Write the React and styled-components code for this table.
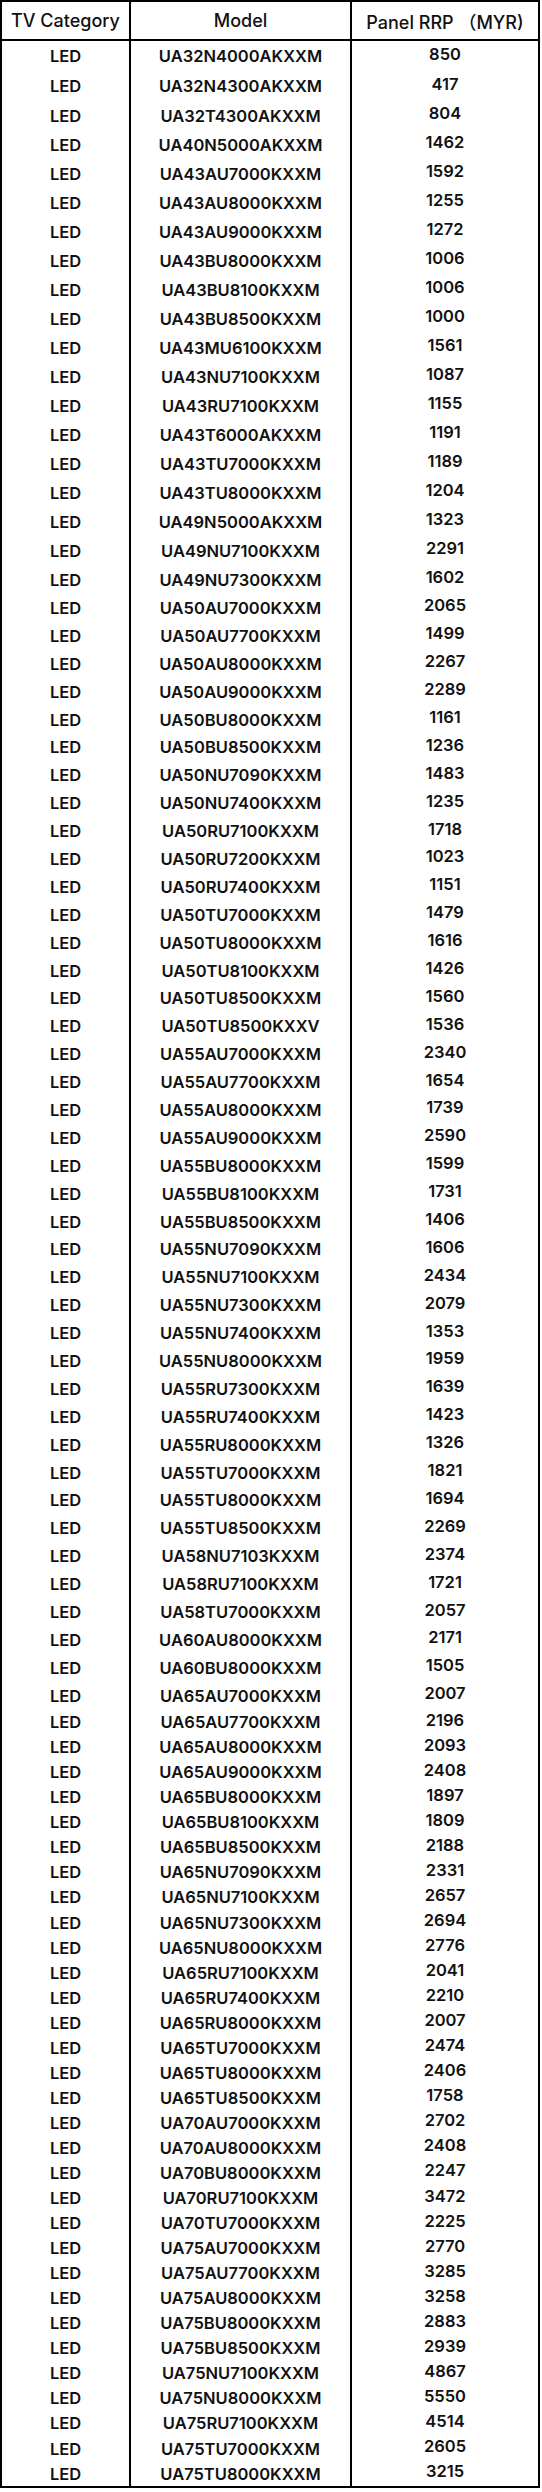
import styled, { createGlobalStyle } from "styled-components";

const GlobalStyle = createGlobalStyle`
  html, body {
    margin: 0;
    padding: 0;
    background: #ffffff;
  }
  body {
    font-family: Inter, "Noto Sans", "Noto Sans CJK SC", sans-serif;
    color: #111111;
  }
`;

const rows = [
    ["UA32N4000AKXXM", "850"],
    ["UA32N4300AKXXM", "417"],
    ["UA32T4300AKXXM", "804"],
    ["UA40N5000AKXXM", "1462"],
    ["UA43AU7000KXXM", "1592"],
    ["UA43AU8000KXXM", "1255"],
    ["UA43AU9000KXXM", "1272"],
    ["UA43BU8000KXXM", "1006"],
    ["UA43BU8100KXXM", "1006"],
    ["UA43BU8500KXXM", "1000"],
    ["UA43MU6100KXXM", "1561"],
    ["UA43NU7100KXXM", "1087"],
    ["UA43RU7100KXXM", "1155"],
    ["UA43T6000AKXXM", "1191"],
    ["UA43TU7000KXXM", "1189"],
    ["UA43TU8000KXXM", "1204"],
    ["UA49N5000AKXXM", "1323"],
    ["UA49NU7100KXXM", "2291"],
    ["UA49NU7300KXXM", "1602"],
    ["UA50AU7000KXXM", "2065"],
    ["UA50AU7700KXXM", "1499"],
    ["UA50AU8000KXXM", "2267"],
    ["UA50AU9000KXXM", "2289"],
    ["UA50BU8000KXXM", "1161"],
    ["UA50BU8500KXXM", "1236"],
    ["UA50NU7090KXXM", "1483"],
    ["UA50NU7400KXXM", "1235"],
    ["UA50RU7100KXXM", "1718"],
    ["UA50RU7200KXXM", "1023"],
    ["UA50RU7400KXXM", "1151"],
    ["UA50TU7000KXXM", "1479"],
    ["UA50TU8000KXXM", "1616"],
    ["UA50TU8100KXXM", "1426"],
    ["UA50TU8500KXXM", "1560"],
    ["UA50TU8500KXXV", "1536"],
    ["UA55AU7000KXXM", "2340"],
    ["UA55AU7700KXXM", "1654"],
    ["UA55AU8000KXXM", "1739"],
    ["UA55AU9000KXXM", "2590"],
    ["UA55BU8000KXXM", "1599"],
    ["UA55BU8100KXXM", "1731"],
    ["UA55BU8500KXXM", "1406"],
    ["UA55NU7090KXXM", "1606"],
    ["UA55NU7100KXXM", "2434"],
    ["UA55NU7300KXXM", "2079"],
    ["UA55NU7400KXXM", "1353"],
    ["UA55NU8000KXXM", "1959"],
    ["UA55RU7300KXXM", "1639"],
    ["UA55RU7400KXXM", "1423"],
    ["UA55RU8000KXXM", "1326"],
    ["UA55TU7000KXXM", "1821"],
    ["UA55TU8000KXXM", "1694"],
    ["UA55TU8500KXXM", "2269"],
    ["UA58NU7103KXXM", "2374"],
    ["UA58RU7100KXXM", "1721"],
    ["UA58TU7000KXXM", "2057"],
    ["UA60AU8000KXXM", "2171"],
    ["UA60BU8000KXXM", "1505"],
    ["UA65AU7000KXXM", "2007"],
    ["UA65AU7700KXXM", "2196"],
    ["UA65AU8000KXXM", "2093"],
    ["UA65AU9000KXXM", "2408"],
    ["UA65BU8000KXXM", "1897"],
    ["UA65BU8100KXXM", "1809"],
    ["UA65BU8500KXXM", "2188"],
    ["UA65NU7090KXXM", "2331"],
    ["UA65NU7100KXXM", "2657"],
    ["UA65NU7300KXXM", "2694"],
    ["UA65NU8000KXXM", "2776"],
    ["UA65RU7100KXXM", "2041"],
    ["UA65RU7400KXXM", "2210"],
    ["UA65RU8000KXXM", "2007"],
    ["UA65TU7000KXXM", "2474"],
    ["UA65TU8000KXXM", "2406"],
    ["UA65TU8500KXXM", "1758"],
    ["UA70AU7000KXXM", "2702"],
    ["UA70AU8000KXXM", "2408"],
    ["UA70BU8000KXXM", "2247"],
    ["UA70RU7100KXXM", "3472"],
    ["UA70TU7000KXXM", "2225"],
    ["UA75AU7000KXXM", "2770"],
    ["UA75AU7700KXXM", "3285"],
    ["UA75AU8000KXXM", "3258"],
    ["UA75BU8000KXXM", "2883"],
    ["UA75BU8500KXXM", "2939"],
    ["UA75NU7100KXXM", "4867"],
    ["UA75NU8000KXXM", "5550"],
    ["UA75RU7100KXXM", "4514"],
    ["UA75TU7000KXXM", "2605"],
    ["UA75TU8000KXXM", "3215"],
];

// the scanned sheet gets tighter further down the page
const rowHeight = (i) => {
    if (i < 2) return 30;
    if (i < 19) return 29;
    if (i < 59) return 27.9;
    return 25.06;
};

const PriceTable = styled.div`
  width: 540px;
  box-sizing: border-box;
  border: 2px solid #000;
`;

const Row = styled.div`
  display: grid;
  grid-template-columns: 129px 221px 1fr;
  height: ${(p) => p.$h}px;
  box-sizing: border-box;
  border-bottom: ${(p) => (p.$head ? "2px solid #000" : "none")};
`;

const Cell = styled.div`
  display: flex;
  align-items: center;
  justify-content: center;
  box-sizing: border-box;
  border-right: ${(p) => (p.$last ? "none" : "2px solid #000")};
  padding-bottom: ${(p) => (p.$raise ? "5px" : "0")};
  font-size: ${(p) => (p.$head ? "18px" : "16.5px")};
  font-weight: ${(p) => (p.$head ? 500 : 600)};
  white-space: nowrap;
`;

const App = () => {
    return (
        <>
            <GlobalStyle/>
            <PriceTable>
                <Row $h={39} $head>
                    <Cell $head>TV Category</Cell>
                    <Cell $head>Model</Cell>
                    <Cell $head $last>Panel RRP （MYR)</Cell>
                </Row>
                {rows.map(([model, price], i) => (
                    <Row key={model} $h={rowHeight(i)}>
                        <Cell>LED</Cell>
                        <Cell>{model}</Cell>
                        <Cell $last $raise>{price}</Cell>
                    </Row>
                ))}
            </PriceTable>
        </>
    );
};

export default App;
